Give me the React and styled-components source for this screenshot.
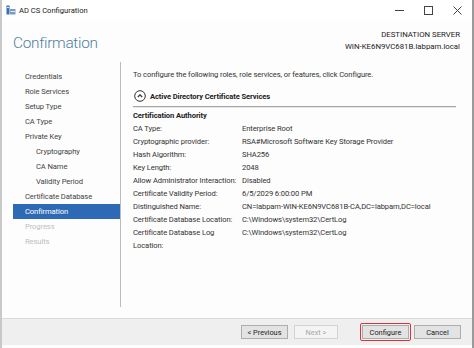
import React from 'react'
import styled, { createGlobalStyle } from 'styled-components'

const GlobalStyle = createGlobalStyle`
  html, body {
    margin: 0;
    padding: 0;
    background: #ffffff;
  }
  body {
    font-family: Roboto, "Noto Sans", "Liberation Sans", sans-serif;
    color: #333333;
  }
`

const navItems = [
  { label: 'Credentials' },
  { label: 'Role Services' },
  { label: 'Setup Type' },
  { label: 'CA Type' },
  { label: 'Private Key' },
  { label: 'Cryptography', sub: true },
  { label: 'CA Name', sub: true },
  { label: 'Validity Period', sub: true },
  { label: 'Certificate Database' },
  { label: 'Confirmation', active: true },
  { label: 'Progress', disabled: true },
  { label: 'Results', disabled: true },
]

const rows = [
  ['CA Type:', 'Enterprise Root'],
  ['Cryptographic provider:', 'RSA#Microsoft Software Key Storage Provider'],
  ['Hash Algorithm:', 'SHA256'],
  ['Key Length:', '2048'],
  ['Allow Administrator Interaction:', 'Disabled'],
  ['Certificate Validity Period:', '6/5/2029 6:00:00 PM'],
  ['Distinguished Name:', 'CN=labpam-WIN-KE6N9VC681B-CA,DC=labpam,DC=local'],
  ['Certificate Database Location:', 'C:\\Windows\\system32\\CertLog'],
  ['Certificate Database Log Location:', 'C:\\Windows\\system32\\CertLog'],
]

function AppIcon() {
  return (
    <svg width="10" height="10" viewBox="0 0 10 10">
      <rect x="0.5" y="0.5" width="3" height="9" fill="#3a6fb0" />
      <rect x="4" y="4" width="5.5" height="5.5" fill="#7a9cc6" />
      <rect x="4.5" y="6" width="4.5" height="1" fill="#dfe8f3" />
      <rect x="1" y="2" width="2" height="1" fill="#dfe8f3" />
    </svg>
  )
}

function CollapseIcon() {
  return (
    <svg width="12" height="12" viewBox="0 0 12 12">
      <circle cx="6" cy="6" r="5.3" fill="none" stroke="#333" strokeWidth="1" />
      <path d="M3.8 7 L6 4.8 L8.2 7" fill="none" stroke="#333" strokeWidth="1.2" />
    </svg>
  )
}

export default function App() {
  return (
    <>
      <GlobalStyle />
      <Window>
        <TitleBar>
          <TitleLeft>
            <AppIcon />
            <span>AD CS Configuration</span>
          </TitleLeft>
          <Controls>
            <Ctrl>
              <svg width="9" height="9" viewBox="0 0 9 9"><path d="M0 4.5 H9" stroke="#444" strokeWidth="1" /></svg>
            </Ctrl>
            <Ctrl>
              <svg width="9" height="9" viewBox="0 0 9 9"><rect x="0.5" y="0.5" width="8" height="8" fill="none" stroke="#444" strokeWidth="1" /></svg>
            </Ctrl>
            <Ctrl>
              <svg width="9" height="9" viewBox="0 0 9 9"><path d="M0.5 0.5 L8.5 8.5 M8.5 0.5 L0.5 8.5" stroke="#444" strokeWidth="1" /></svg>
            </Ctrl>
          </Controls>
        </TitleBar>

        <Header>
          <PageTitle>Confirmation</PageTitle>
          <Server>
            <div>DESTINATION SERVER</div>
            <div>WIN-KE6N9VC681B.labpam.local</div>
          </Server>
        </Header>

        <Body>
          <Nav>
            {navItems.map((item) => (
              <NavItem
                key={item.label}
                $sub={item.sub}
                $active={item.active}
                $disabled={item.disabled}
              >
                {item.label}
              </NavItem>
            ))}
          </Nav>

          <Content>
            <Intro>To configure the following roles, role services, or features, click Configure.</Intro>
            <SectionHead>
              <CollapseIcon />
              <span>Active Directory Certificate Services</span>
            </SectionHead>
            <SubHead>Certification Authority</SubHead>
            <Table>
              {rows.map(([k, v]) => (
                <React.Fragment key={k}>
                  <Key>{k}</Key>
                  <Val>{v}</Val>
                </React.Fragment>
              ))}
            </Table>
          </Content>
        </Body>

        <Footer>
          <Button>&lt; Previous</Button>
          <Button disabled $narrow>Next &gt;</Button>
          <Highlight>
            <Button>Configure</Button>
          </Highlight>
          <Button>Cancel</Button>
        </Footer>
      </Window>
    </>
  )
}

const Window = styled.div`
  width: 474px;
  height: 348px;
  box-sizing: border-box;
  border-left: 2px solid #c9c9c9;
  border-right: 2px solid #9a9a9a;
  background: #fdfdfd;
  display: flex;
  flex-direction: column;
  overflow: hidden;
`

const TitleBar = styled.div`
  height: 20px;
  flex: none;
  display: flex;
  align-items: center;
  justify-content: space-between;
  background: #ffffff;
  padding-left: 4px;
`

const TitleLeft = styled.div`
  display: flex;
  align-items: center;
  gap: 3px;
  font-size: 7.6px;
  color: #222;
`

const Controls = styled.div`
  display: flex;
  align-items: center;
  height: 100%;
`

const Ctrl = styled.div`
  width: 29px;
  height: 100%;
  display: flex;
  align-items: center;
  justify-content: center;
`

const Header = styled.div`
  height: 42px;
  flex: none;
  display: flex;
  justify-content: space-between;
  align-items: flex-start;
  padding: 0 12px 0 11px;
`

const PageTitle = styled.div`
  font-size: 15.4px;
  font-weight: 300;
  color: #4f7f9e;
  margin-top: 14px;
  letter-spacing: -0.3px;
`

const Server = styled.div`
  text-align: right;
  font-size: 7.8px;
  line-height: 12px;
  color: #222;
  margin-top: 9px;
`

const Body = styled.div`
  flex: 1;
  display: flex;
  min-height: 0;
`

const Nav = styled.div`
  width: 107px;
  margin-left: 11px;
  flex: none;
  border-right: 1px solid #bcbcbc;
  padding-top: 7px;
  margin-bottom: 11px;
  display: flex;
  flex-direction: column;
`

const NavItem = styled.div`
  height: 15px;
  line-height: 15px;
  font-size: 7.6px;
  letter-spacing: -0.1px;
  padding-left: ${(p) => (p.$sub ? '23px' : '12px')};
  color: ${(p) => (p.$active ? '#ffffff' : p.$disabled ? '#bdbdbd' : '#444444')};
  background: ${(p) => (p.$active ? '#2d69b4' : 'transparent')};
  white-space: nowrap;
`

const Content = styled.div`
  flex: 1;
  padding: 6px 16px 0 12px;
  font-size: 7.6px;
  letter-spacing: -0.1px;
  color: #333;
`

const Intro = styled.div`
  line-height: 13px;
`

const SectionHead = styled.div`
  margin-top: 7px;
  display: flex;
  align-items: center;
  gap: 4px;
  font-weight: 700;
  height: 16px;
  padding-left: 1px;
  padding-bottom: 2px;
  border-bottom: 1px solid #a8a8a8;
  box-shadow: 0 1px 0 #e6e6e6;
  color: #222;
`

const SubHead = styled.div`
  margin-top: 2px;
  font-weight: 700;
  line-height: 13px;
  color: #222;
`

const Table = styled.div`
  display: grid;
  grid-template-columns: 109px 1fr;
  line-height: 13px;
`

const Key = styled.div`
  padding-right: 1px;
`

const Val = styled.div`
  white-space: nowrap;
`

const Footer = styled.div`
  height: 26px;
  flex: none;
  margin-bottom: 3px;
  background: #efefef;
  border-top: 1px solid #dadada;
  display: flex;
  align-items: center;
  justify-content: flex-end;
  padding-right: 11px;
  gap: 6px;
`

const Button = styled.button`
  width: ${(p) => (p.$narrow ? '44px' : '47px')};
  height: 14px;
  padding: 0;
  font-family: inherit;
  font-size: 7.4px;
  color: ${(p) => (p.disabled ? '#a8a8a8' : '#222')};
  background: ${(p) => (p.disabled ? '#f4f4f4' : '#e3e3e3')};
  border: 1px solid ${(p) => (p.disabled ? '#d2d2d2' : '#adadad')};
  border-radius: 0;
`

const Highlight = styled.div`
  margin-left: 16px;
  padding: 1px;
  border: 1.5px solid #d8343c;
  border-radius: 2px;
  display: flex;
  margin-right: -3px;
`
